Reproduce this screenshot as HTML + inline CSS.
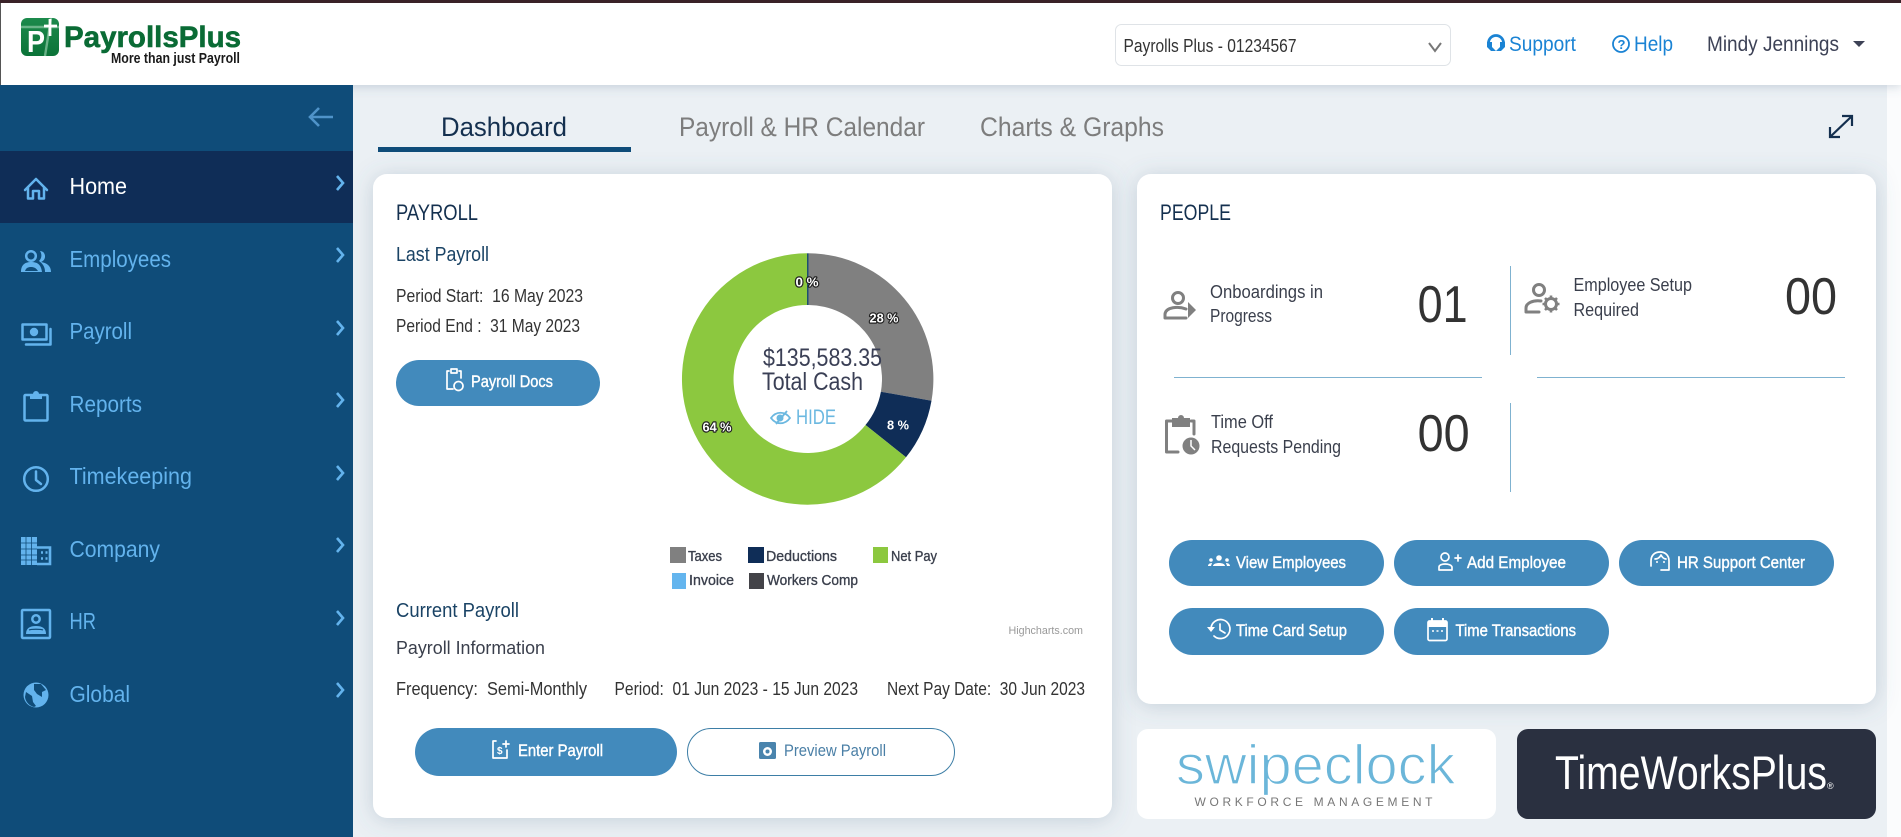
<!DOCTYPE html>
<html lang="en"><head><meta charset="utf-8"><title>PayrollsPlus Dashboard</title>
<style>
html,body{margin:0;padding:0;background:#fff;overflow:hidden}
svg{display:block;font-family:"Liberation Sans",sans-serif}
.s{font-size:23.5px;fill:#63b3ed}
.b{font-size:16.5px;fill:#fff;stroke:#fff;stroke-width:.4px}
.d{font-size:18px;fill:#333}
.p{font-size:18px;fill:#3a3f4c}
.n{font-size:52px;fill:#333}
.l{font-size:15px;fill:#3a3f4c;stroke:#3a3f4c;stroke-width:.35px}
.pc{font-size:13px;font-weight:bold;fill:#fff;stroke:#222;stroke-width:2.4px;paint-order:stroke;stroke-linejoin:round}
.ic{fill:none;stroke:#63b3ed;stroke-width:2.5;stroke-linecap:round;stroke-linejoin:round}
.w{fill:none;stroke:#fff;stroke-width:1.7;stroke-linecap:round;stroke-linejoin:round}
.g{fill:none;stroke:#808080;stroke-width:3;stroke-linecap:round;stroke-linejoin:round}
</style></head>
<body>
<svg xmlns="http://www.w3.org/2000/svg" width="1901" height="837" viewBox="0 0 1901 837">
<defs>
<filter id="sh" x="-10%" y="-10%" width="120%" height="120%"><feDropShadow dx="0" dy="2" stdDeviation="11" flood-color="#54708a" flood-opacity=".26"/></filter>
<filter id="hs" x="-2%" y="-20%" width="104%" height="160%"><feDropShadow dx="0" dy="2" stdDeviation="5" flood-color="#54708a" flood-opacity=".25"/></filter>
<linearGradient id="logo" x1="0" y1="0" x2="0" y2="1"><stop offset="0" stop-color="#1c8a4c"/><stop offset="1" stop-color="#0b7338"/></linearGradient>
</defs>

<!-- background -->
<rect width="1901" height="837" fill="#fff"/>
<rect x="353" y="85" width="1534" height="752" fill="#ebf0f4"/>
<rect x="1887" y="85" width="14" height="752" fill="#fbfcfd"/>

<!-- header -->
<rect x="0" y="0" width="1901" height="85" fill="#fff" filter="url(#hs)"/>
<rect x="0" y="0" width="1901" height="3" fill="#3a2228"/>
<rect x="0" y="3" width="1" height="82" fill="#555"/>

<rect x="21" y="18" width="38" height="38" rx="6" fill="url(#logo)"/>
<path d="M21 27 H59 M51 18 L45 56" stroke="#7fc09a" stroke-width="2.400" fill="none" opacity=".8"/>
<path d="M50 19 V36 M44 26 H57" stroke="#fff" stroke-width="2.800" fill="none"/>
<text x="27" y="52" font-size="31" font-weight="bold" fill="#fff" textLength="18" lengthAdjust="spacingAndGlyphs">P</text>
<text x="64" y="47" font-size="30" font-weight="bold" fill="#0a6b35" stroke="#0a6b35" stroke-width=".6" textLength="177" lengthAdjust="spacingAndGlyphs">PayrollsPlus</text>
<text x="111" y="63" font-size="15" font-weight="bold" fill="#1a1a1a" textLength="129" lengthAdjust="spacingAndGlyphs">More than just Payroll</text>

<rect x="1115.500" y="24.500" width="335" height="41" rx="6" fill="#fff" stroke="#dfe3e7"/>
<text x="1123.500" y="52" class="d" textLength="173" lengthAdjust="spacingAndGlyphs">Payrolls Plus - 01234567</text>
<path d="M1429 43 L1435 51 L1441 43" fill="none" stroke="#777" stroke-width="2"/>

<path d="M1488.500 47 V43 A7.500 7.500 0 0 1 1503.500 43 V47" fill="none" stroke="#1a83d4" stroke-width="2.800"/>
<path d="M1487 42 H1492 V47 L1496 51 L1500 47 V42 H1505 V47 L1501 51 H1491 L1487 47 Z" fill="#1a83d4"/>
<text x="1509" y="51" font-size="21" fill="#1a83d4" textLength="67" lengthAdjust="spacingAndGlyphs">Support</text>
<circle cx="1621" cy="44" r="8" fill="none" stroke="#1a83d4" stroke-width="1.800"/>
<text x="1617.500" y="49" font-size="13" font-weight="bold" fill="#1a83d4">?</text>
<text x="1634" y="51" font-size="21" fill="#1a83d4" textLength="39" lengthAdjust="spacingAndGlyphs">Help</text>
<text x="1707" y="51" font-size="21" fill="#3d4256" textLength="132" lengthAdjust="spacingAndGlyphs">Mindy Jennings</text>
<path d="M1853 41 H1865 L1859 47 Z" fill="#3d4256"/>

<!-- sidebar -->
<rect x="0" y="85" width="353" height="752" fill="#0f4c79"/>
<rect x="0" y="151" width="353" height="72" fill="#0f2d57"/>
<path d="M310 117 H333 M319 108 L310 117 L319 126" fill="none" stroke="#4f93c9" stroke-width="2.600"/>

<text x="69.500" y="194" class="s" style="fill:#fff" textLength="57.500" lengthAdjust="spacingAndGlyphs">Home</text>
<text x="69.500" y="267" class="s" textLength="101.500" lengthAdjust="spacingAndGlyphs">Employees</text>
<text x="69.500" y="339" class="s" textLength="62.500" lengthAdjust="spacingAndGlyphs">Payroll</text>
<text x="69.500" y="412" class="s" textLength="72.500" lengthAdjust="spacingAndGlyphs">Reports</text>
<text x="69.500" y="484" class="s" textLength="122.500" lengthAdjust="spacingAndGlyphs">Timekeeping</text>
<text x="69.500" y="557" class="s" textLength="90.500" lengthAdjust="spacingAndGlyphs">Company</text>
<text x="69.500" y="629" class="s" textLength="26.500" lengthAdjust="spacingAndGlyphs">HR</text>
<text x="69.500" y="702" class="s" textLength="60.500" lengthAdjust="spacingAndGlyphs">Global</text>

<g fill="none" stroke="#63b3ed" stroke-width="2.600">
<path d="M337 176 L343 183 L337 190"/><path d="M337 248 L343 255 L337 262"/>
<path d="M337 321 L343 328 L337 335"/><path d="M337 393 L343 400 L337 407"/>
<path d="M337 466 L343 473 L337 480"/><path d="M337 538 L343 545 L337 552"/>
<path d="M337 611 L343 618 L337 625"/><path d="M337 683 L343 690 L337 697"/>
</g>

<path class="ic" d="M25 190 L36 179 L47 190 M28 187 V198.500 H33 V191 H39 V198.500 H44 V187"/>
<circle class="ic" cx="31" cy="256" r="4.800" stroke-width="2.800"/>
<path d="M21 272 C21 264 26 262 31 262 C37 262 41 264 42 272 Z M40 251 C46 251 47 260 41 262 C47 263 51 266 51 272 H45 C45 267 43 264 39 261 C42 258 42 254 40 251 Z" fill="#63b3ed"/>
<path d="M25 271 C26 268 28 267 31 267 C34 267 36 268 38 271 Z" fill="#0f4c79"/>
<rect class="ic" x="22.500" y="324.500" width="24" height="15" stroke-width="2.600"/>
<circle cx="34" cy="332" r="4.200" fill="#63b3ed"/>
<path class="ic" d="M50.500 329 V344.500 H26"/>
<rect class="ic" x="24.500" y="395" width="23" height="25.500" rx="1"/>
<path d="M30 394 H33 A3 3 0 0 1 39 394 H42 V399 H30 Z" fill="#63b3ed"/>
<circle class="ic" cx="36" cy="479" r="11.800"/>
<path class="ic" d="M36 471.500 V480 L41 484" stroke-width="1.800"/>
<rect x="21" y="537" width="16" height="28" fill="#63b3ed"/>
<path d="M26 537 V565 M31.500 537 V565 M21 543 H37 M21 549 H37 M21 555 H37 M21 560 H37" stroke="#0f4c79" stroke-width=".8"/>
<path d="M37 547.500 H50 V564 H37" fill="none" stroke="#63b3ed" stroke-width="2.600"/>
<path d="M41 552.500 H43 M45.500 552.500 H47.500 M41 558.500 H43 M45.500 558.500 H47.500" stroke="#63b3ed" stroke-width="2.400"/>
<rect class="ic" x="22" y="610" width="28" height="28" rx="1" stroke-width="3"/>
<circle class="ic" cx="36" cy="619" r="3.700" stroke-width="2.300"/>
<path d="M26 634 C26 628 30 626 36 626 C42 626 46 628 46 634 Z" fill="#63b3ed"/>
<path d="M29 630 C31 629 41 629 43 630" stroke="#0f4c79" stroke-width="1.200" fill="none"/>
<circle cx="36" cy="695" r="12.500" fill="#63b3ed"/>
<path d="M26 692 L32 696 L33 702 L36 706 L34 707 A12 12 0 0 1 25 697 Z M34 684 L41 684 L46 690 L42 692 L42 697 L37 694 L34 690 Z" fill="#0f4c79"/>

<!-- tabs -->
<text x="441" y="136" font-size="27" fill="#14304f" textLength="126" lengthAdjust="spacingAndGlyphs">Dashboard</text>
<rect x="378" y="147" width="253" height="5" fill="#0f4c79"/>
<text x="679" y="136" font-size="27" fill="#7d7d7d" textLength="246" lengthAdjust="spacingAndGlyphs">Payroll &amp; HR Calendar</text>
<text x="980" y="136" font-size="27" fill="#7d7d7d" textLength="184" lengthAdjust="spacingAndGlyphs">Charts &amp; Graphs</text>
<path d="M1830 137 L1852 116 M1842 116 H1852 V126 M1830 127 V137 H1840" fill="none" stroke="#14304f" stroke-width="2.200"/>

<!-- payroll card -->
<rect x="373" y="174" width="739" height="644" rx="14" fill="#fff" filter="url(#sh)"/>
<text x="396" y="220" font-size="22.500" fill="#14304f" textLength="82" lengthAdjust="spacingAndGlyphs">PAYROLL</text>
<text x="396" y="261" font-size="20" fill="#1a4365" textLength="93" lengthAdjust="spacingAndGlyphs">Last Payroll</text>
<text x="396" y="302" class="d" textLength="187" lengthAdjust="spacingAndGlyphs" xml:space="preserve">Period Start:  16 May 2023</text>
<text x="396" y="332" class="d" textLength="184" lengthAdjust="spacingAndGlyphs" xml:space="preserve">Period End :  31 May 2023</text>
<rect x="396" y="360" width="204" height="46" rx="23" fill="#428abc"/>
<path class="w" d="M449 371 H447 V389 H453 M459 371 H461 V378 M451 369 H457 V373 H451 Z"/>
<circle class="w" cx="458.500" cy="386" r="4.500" stroke-width="1.200"/>
<text x="471" y="387" class="b" textLength="82" lengthAdjust="spacingAndGlyphs">Payroll Docs</text>

<!-- donut -->
<path d="M808.500 253.300 A125.700 125.700 0 0 1 931.500 400.700 L880.900 391.700 A74 74 0 0 0 808.500 305 Z" fill="#808080"/>
<path d="M931.500 400.700 A125.700 125.700 0 0 1 906 457.300 L865.500 425 A74 74 0 0 0 880.900 391.700 Z" fill="#0f2d57"/>
<path d="M906 457.300 A125.700 125.700 0 1 1 807 253.300 L807 305 A74 74 0 1 0 865.500 425 Z" fill="#8cc83f"/>
<rect x="807" y="253.300" width="1.500" height="51.700" fill="#1e4f6e"/>
<text x="807" y="286.500" class="pc" text-anchor="middle" textLength="23" lengthAdjust="spacingAndGlyphs">0 %</text>
<text x="884" y="322.500" class="pc" text-anchor="middle" textLength="29" lengthAdjust="spacingAndGlyphs">28 %</text>
<text x="898" y="429.500" class="pc" text-anchor="middle" textLength="22" lengthAdjust="spacingAndGlyphs" style="stroke:#0f2d57">8 %</text>
<text x="717" y="431.500" class="pc" text-anchor="middle" textLength="29" lengthAdjust="spacingAndGlyphs">64 %</text>
<text x="763" y="366" font-size="25" fill="#3a3f55" textLength="119" lengthAdjust="spacingAndGlyphs">$135,583.35</text>
<text x="762" y="390" font-size="25" fill="#3a3f55" textLength="101" lengthAdjust="spacingAndGlyphs">Total Cash</text>
<path d="M771 418 C776 411 785 411 790 418 C785 425 776 425 771 418 Z" fill="none" stroke="#6bb8e0" stroke-width="1.800"/>
<circle cx="780" cy="418" r="3.500" fill="#6bb8e0"/>
<path d="M776 424 L787 411" stroke="#6bb8e0" stroke-width="1.800"/>
<text x="796" y="424" font-size="21" fill="#6bb8e0" textLength="40" lengthAdjust="spacingAndGlyphs">HIDE</text>

<!-- legend -->
<rect x="670" y="547" width="16" height="16" fill="#808080"/>
<text x="688" y="561" class="l" textLength="34" lengthAdjust="spacingAndGlyphs">Taxes</text>
<rect x="748" y="547" width="16" height="16" fill="#0f2d57"/>
<text x="766" y="561" class="l" textLength="71" lengthAdjust="spacingAndGlyphs">Deductions</text>
<rect x="873" y="547" width="15" height="16" fill="#8cc83f"/>
<text x="891" y="561" class="l" textLength="46" lengthAdjust="spacingAndGlyphs">Net Pay</text>
<rect x="672" y="573" width="14" height="16" fill="#64b5ee"/>
<text x="689" y="585" class="l" textLength="45" lengthAdjust="spacingAndGlyphs">Invoice</text>
<rect x="749" y="573" width="15" height="16" fill="#434348"/>
<text x="767" y="585" class="l" textLength="91" lengthAdjust="spacingAndGlyphs">Workers Comp</text>

<text x="396" y="617" font-size="20" fill="#1a4365" textLength="123" lengthAdjust="spacingAndGlyphs">Current Payroll</text>
<text x="1008.500" y="634" font-size="11" fill="#999" textLength="74.500" lengthAdjust="spacingAndGlyphs">Highcharts.com</text>
<text x="396" y="654" font-size="18.500" fill="#3a3f4c" textLength="149" lengthAdjust="spacingAndGlyphs">Payroll Information</text>
<text x="396" y="695" class="d" textLength="191" lengthAdjust="spacingAndGlyphs" xml:space="preserve">Frequency:  Semi-Monthly</text>
<text x="614.500" y="695" class="d" textLength="243.500" lengthAdjust="spacingAndGlyphs" xml:space="preserve">Period:  01 Jun 2023 - 15 Jun 2023</text>
<text x="887" y="695" class="d" textLength="198" lengthAdjust="spacingAndGlyphs" xml:space="preserve">Next Pay Date:  30 Jun 2023</text>

<rect x="415" y="728" width="262" height="48" rx="24" fill="#428abc"/>
<path class="w" d="M496 741 H493 V758 H507 V750"/>
<text x="497" y="754" font-size="10" font-weight="bold" fill="#fff">$</text>
<path class="w" d="M506 741 V747 M503 744 H509"/>
<text x="518" y="756" class="b" textLength="85" lengthAdjust="spacingAndGlyphs">Enter Payroll</text>
<rect x="687.500" y="728.500" width="267" height="47" rx="23.500" fill="#fff" stroke="#3d7ea6"/>
<rect x="759" y="742" width="17" height="17" rx="1.500" fill="#4a84ad"/>
<circle cx="767.500" cy="751.500" r="4.500" fill="#fff"/>
<circle cx="767.500" cy="751.500" r="2" fill="#4a84ad"/>
<text x="784" y="756" font-size="16.500" fill="#4a7fa6" textLength="102" lengthAdjust="spacingAndGlyphs">Preview Payroll</text>

<!-- people card -->
<rect x="1137" y="174" width="739" height="530" rx="14" fill="#fff" filter="url(#sh)"/>
<text x="1160" y="220" font-size="22.500" fill="#14304f" textLength="71" lengthAdjust="spacingAndGlyphs">PEOPLE</text>

<circle class="g" cx="1178" cy="298" r="5.500"/>
<path class="g" d="M1186 309 C1178 306 1166 307 1165 314 V318 H1186"/>
<path d="M1188 302 L1196 310 L1188 318 Z" fill="#808080"/>
<text x="1210" y="298" class="p" textLength="113" lengthAdjust="spacingAndGlyphs">Onboardings in</text>
<text x="1210" y="322" class="p" textLength="62" lengthAdjust="spacingAndGlyphs">Progress</text>
<text x="1417.600" y="322" class="n" textLength="50" lengthAdjust="spacingAndGlyphs">01</text>

<rect x="1510" y="266" width="1" height="89" fill="#7fb2d0"/>
<rect x="1510" y="403" width="1" height="89" fill="#7fb2d0"/>
<rect x="1174" y="377" width="308" height="1" fill="#7fb2d0"/>
<rect x="1537" y="377" width="308" height="1" fill="#7fb2d0"/>

<circle class="g" cx="1539" cy="290" r="5.500"/>
<path class="g" d="M1541 301 C1533 300 1526 303 1526 308 V312 H1539"/>
<circle cx="1551" cy="304" r="5.500" fill="none" stroke="#808080" stroke-width="3"/>
<path d="M1551 295.500 V298 M1551 310 V312.500 M1542.500 304 H1545 M1557 304 H1559.500 M1545 298 L1547 300 M1555 308 L1557 310 M1545 310 L1547 308 M1555 300 L1557 298" stroke="#808080" stroke-width="2.600"/>
<text x="1573.500" y="291" class="p" textLength="118.500" lengthAdjust="spacingAndGlyphs">Employee Setup</text>
<text x="1573.500" y="316" class="p" textLength="65.500" lengthAdjust="spacingAndGlyphs">Required</text>
<text x="1785" y="314" class="n" textLength="52" lengthAdjust="spacingAndGlyphs">00</text>

<path class="g" d="M1172 421 H1166.500 V452 H1178 M1191 421 H1194 V434"/>
<path d="M1172 418 H1178 A3 3 0 0 1 1184 418 H1190 V427 H1172 Z" fill="#808080"/>
<circle cx="1191" cy="446" r="8.500" fill="#808080"/>
<path d="M1191 440 V446 L1195 450" fill="none" stroke="#fff" stroke-width="1.500"/>
<text x="1211" y="428" class="p" textLength="62" lengthAdjust="spacingAndGlyphs">Time Off</text>
<text x="1211" y="453" class="p" textLength="130" lengthAdjust="spacingAndGlyphs">Requests Pending</text>
<text x="1417.600" y="451" class="n" textLength="52" lengthAdjust="spacingAndGlyphs">00</text>

<!-- people buttons -->
<rect x="1169" y="540" width="215" height="46" rx="23" fill="#428abc"/>
<rect x="1394" y="540" width="215" height="46" rx="23" fill="#428abc"/>
<rect x="1619" y="540" width="215" height="46" rx="23" fill="#428abc"/>
<rect x="1169" y="608" width="215" height="47" rx="23.500" fill="#428abc"/>
<rect x="1394" y="608" width="215" height="47" rx="23.500" fill="#428abc"/>

<g fill="#fff"><circle cx="1219" cy="558" r="2.800"/><circle cx="1211" cy="560" r="1.800"/><circle cx="1227" cy="560" r="1.800"/><path d="M1213 566 C1213 562 1225 562 1225 566 Z M1208 566 C1208 564 1210 563 1212 563 L1211 566 Z M1230 566 C1230 564 1228 563 1226 563 L1227 566 Z"/></g>
<text x="1236" y="568" class="b" textLength="110" lengthAdjust="spacingAndGlyphs">View Employees</text>

<circle class="w" cx="1445" cy="557" r="4"/>
<path class="w" d="M1439 570 V567 C1439 563 1451 563 1452 567 V570 Z M1455 558 H1461 M1458 555 V561"/>
<text x="1467" y="568" class="b" textLength="99" lengthAdjust="spacingAndGlyphs">Add Employee</text>

<path class="w" d="M1651 566 V561 C1651 555 1655 552 1660 552 C1665 552 1669 555 1669 561 V570 H1661 M1655 559 C1658 559 1660 557 1661 555 C1662 557 1664 559 1666 559"/>
<circle cx="1657" cy="562" r="1" fill="#fff"/><circle cx="1664" cy="562" r="1" fill="#fff"/>
<text x="1677" y="568" class="b" textLength="128" lengthAdjust="spacingAndGlyphs">HR Support Center</text>

<path class="w" d="M1211 628 A9.500 9.500 0 1 1 1214 636" stroke-width="2"/>
<path d="M1207 627 H1215 L1211 632 Z" fill="#fff"/>
<path class="w" d="M1220 624 V630 L1225 633"/>
<text x="1236" y="636" class="b" textLength="111" lengthAdjust="spacingAndGlyphs">Time Card Setup</text>

<rect class="w" x="1428" y="621" width="19" height="19.500" rx="1.500" stroke-width="2"/>
<path d="M1428 621 H1447 V627 H1428 Z" fill="#fff"/>
<path d="M1432 618 V622 M1443 618 V622" stroke="#fff" stroke-width="2"/>
<path d="M1432 631 H1434 M1436.500 631 H1438.500 M1441 631 H1443" stroke="#fff" stroke-width="1.600"/>
<text x="1455.500" y="636" class="b" textLength="120.500" lengthAdjust="spacingAndGlyphs">Time Transactions</text>

<!-- brand cards -->
<rect x="1137" y="729" width="359" height="90" rx="11" fill="#fff"/>
<text x="1176" y="784" font-size="56" fill="#6bb6d9" stroke="#fff" stroke-width="1.300" textLength="279.500" lengthAdjust="spacingAndGlyphs">swipeclock</text>
<text x="1194.500" y="806" font-size="12" fill="#777" textLength="238" xml:space="preserve">WORKFORCE MANAGEMENT</text>
<rect x="1517" y="729" width="359" height="90" rx="11" fill="#2a3040"/>
<text x="1555" y="789" font-size="47" fill="#fff" textLength="272" lengthAdjust="spacingAndGlyphs">TimeWorksPlus</text>
<text x="1827" y="789" font-size="9" fill="#fff">®</text>
</svg>
</body></html>
